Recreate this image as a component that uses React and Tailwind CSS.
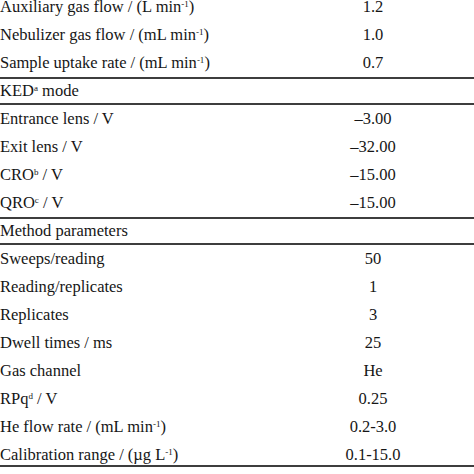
const rows = [
  { label: ["Auxiliary gas flow / (L min", "-1", ")"], value: "1.2" },
  { label: ["Nebulizer gas flow / (mL min", "-1", ")"], value: "1.0" },
  { label: ["Sample uptake rate / (mL min", "-1", ")"], value: "0.7" },
  { label: ["KED", "a", " mode"], section: true },
  { label: ["Entrance lens / V"], value: "–3.00" },
  { label: ["Exit lens / V"], value: "–32.00" },
  { label: ["CRO", "b", " / V"], value: "–15.00" },
  { label: ["QRO", "c", " / V"], value: "–15.00" },
  { label: ["Method parameters"], section: true },
  { label: ["Sweeps/reading"], value: "50" },
  { label: ["Reading/replicates"], value: "1" },
  { label: ["Replicates"], value: "3" },
  { label: ["Dwell times / ms"], value: "25" },
  { label: ["Gas channel"], value: "He" },
  { label: ["RPq", "d", " / V"], value: "0.25" },
  { label: ["He flow rate / (mL min", "-1", ")"], value: "0.2-3.0" },
  { label: ["Calibration range / (µg L", "-1", ")"], value: "0.1-15.0", last: true },
];

function Label({ parts }) {
  return (
    <span>
      {parts[0]}
      {parts[1] && <sup className="text-[9px] top-[-5px]">{parts[1]}</sup>}
      {parts[2]}
    </span>
  );
}

export default function App() {
  return (
    <div
      className="w-[474px] h-[474px] overflow-hidden bg-white text-[#161616] text-[16.5px]"
      style={{ fontFamily: '"Liberation Serif", "Times New Roman", serif' }}
    >
      <div className="mt-[-7px]">
        {rows.map((r, i) => {
          if (r.section) {
            return (
              <div
                key={i}
                className="h-[28px] box-border border-y-2 border-[#3d3d3d] leading-[24px]"
              >
                <Label parts={r.label} />
              </div>
            );
          }
          return (
            <div
              key={i}
              className={
                r.last
                  ? "grid grid-cols-[300px_146px] h-[24px] leading-[28px] border-b-2 border-[#3d3d3d] box-content"
                  : "grid grid-cols-[300px_146px] h-[28px] leading-[28px]"
              }
            >
              <div className="whitespace-nowrap">
                <Label parts={r.label} />
              </div>
              <div className="text-center">{r.value}</div>
            </div>
          );
        })}
      </div>
    </div>
  );
}
